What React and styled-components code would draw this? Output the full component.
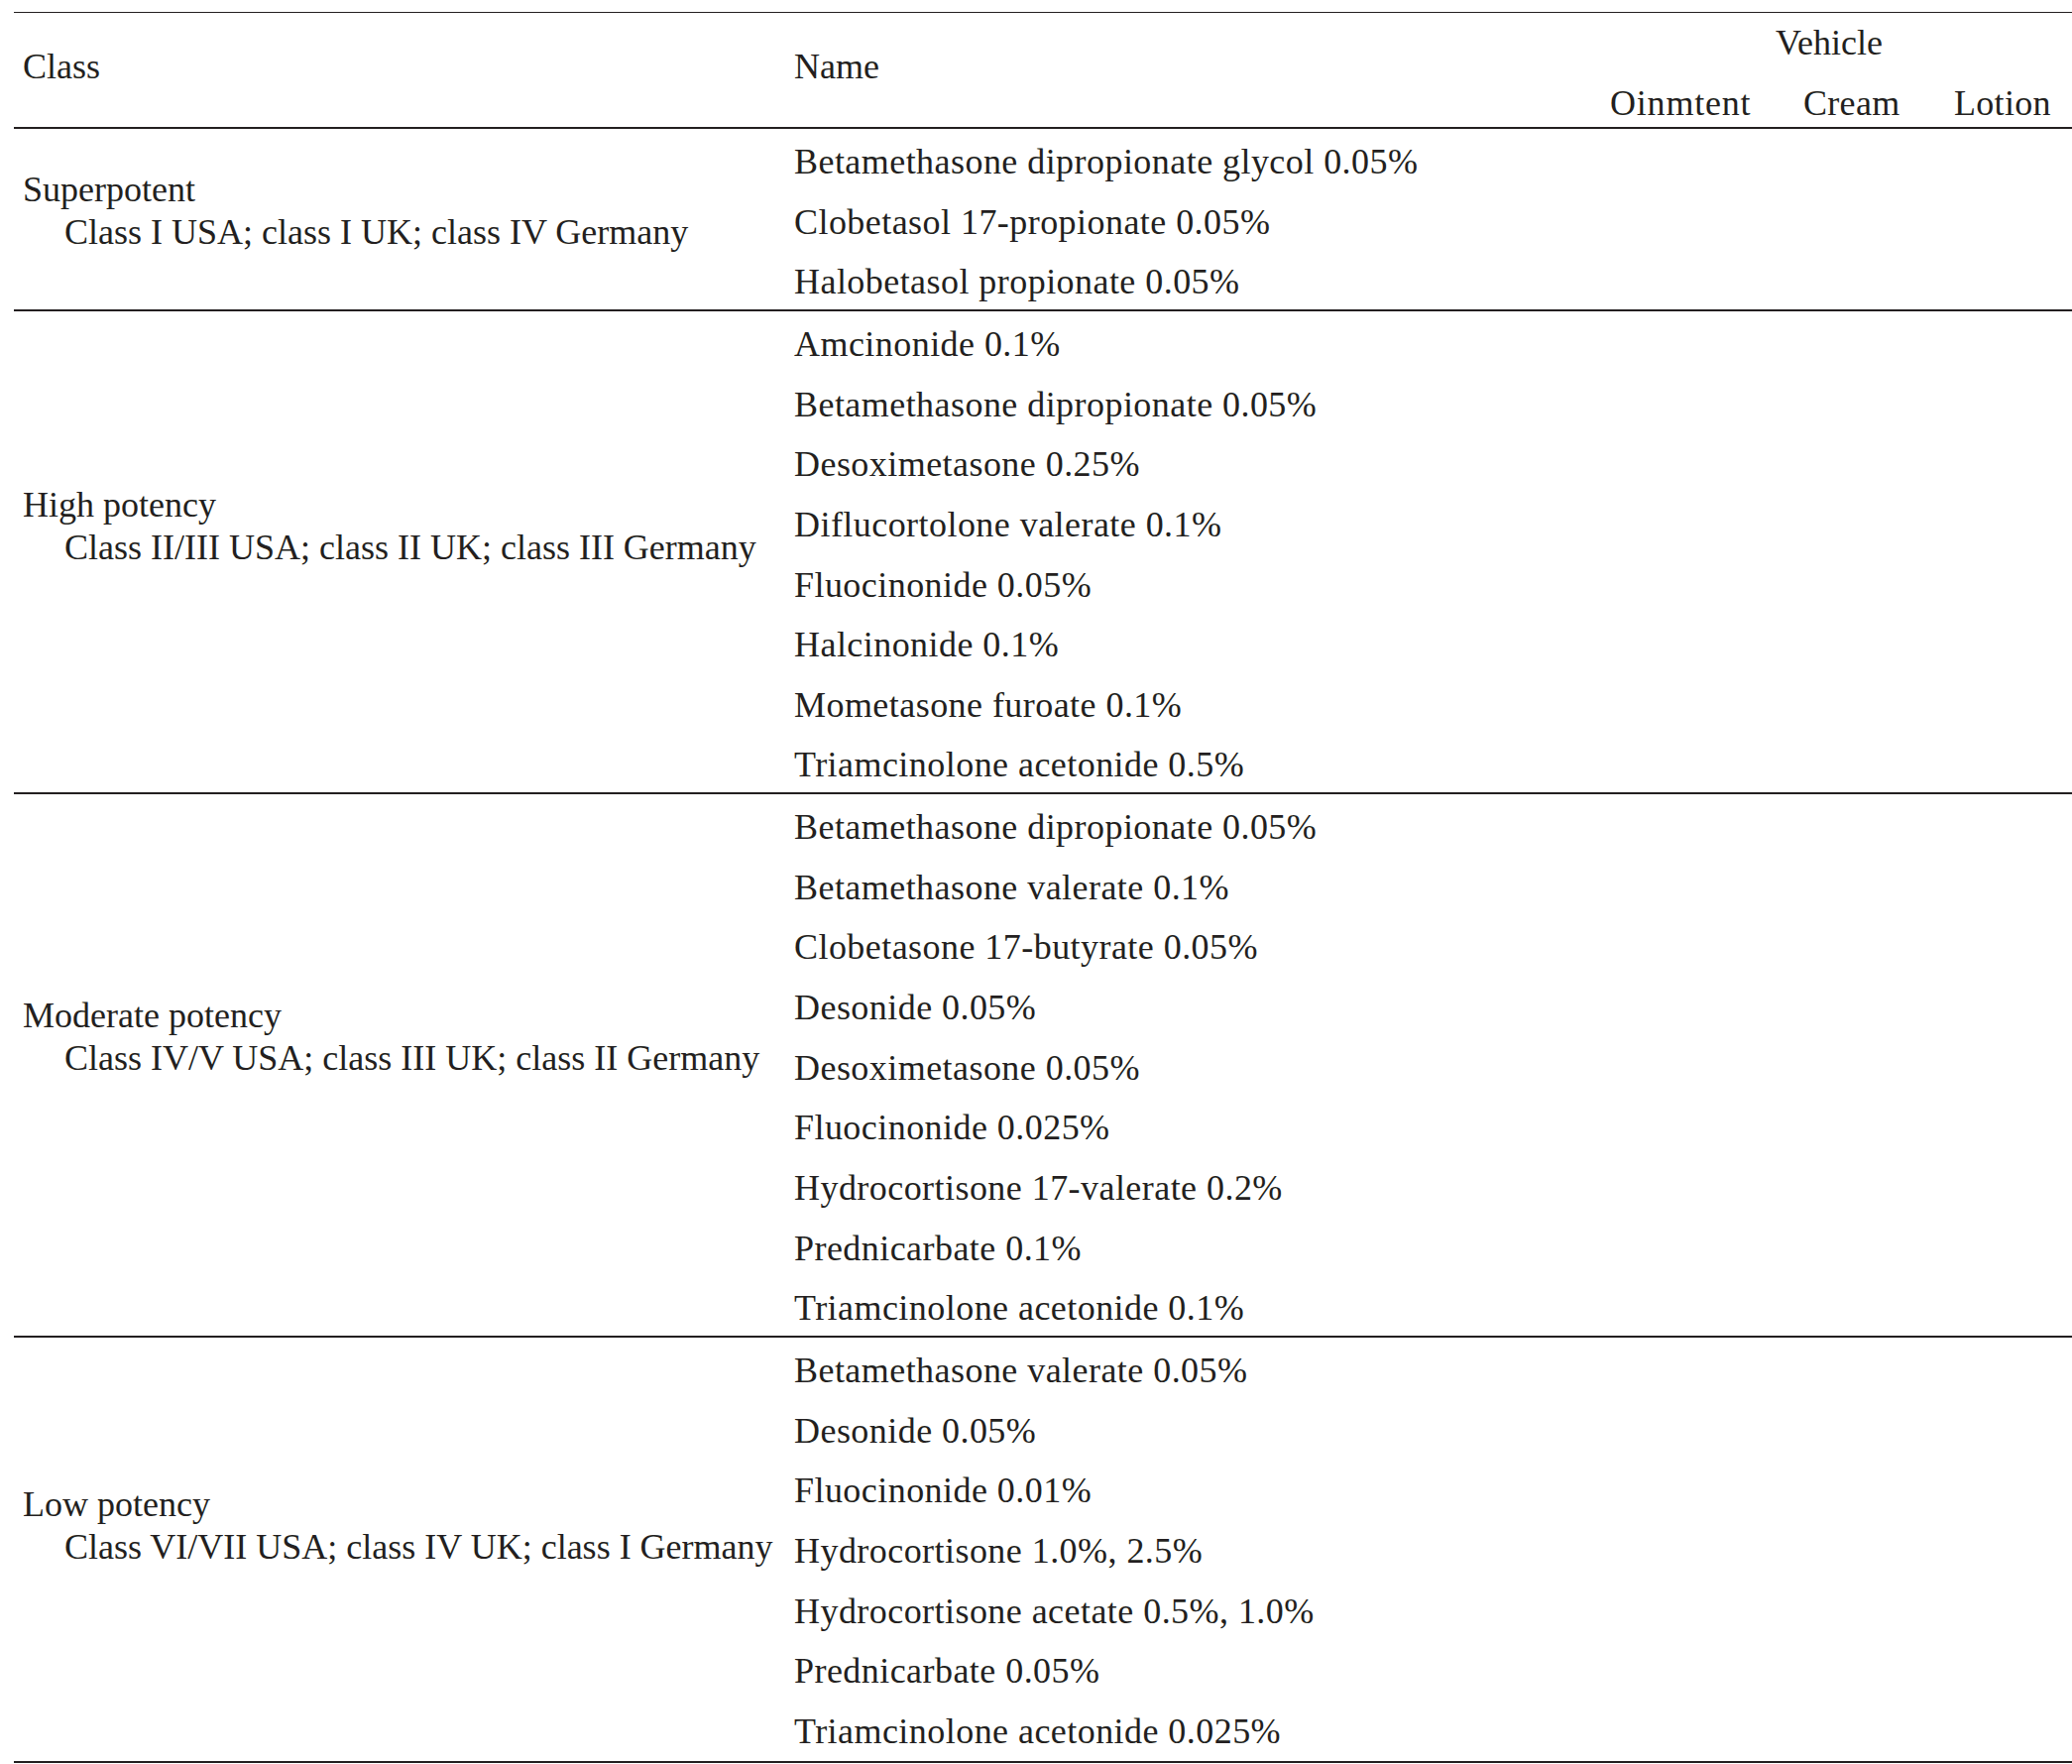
import React from 'react'
import styled, { createGlobalStyle } from 'styled-components'

const ink = '#231f20'
const columns = '778px 808px 195px 152px 143px'

const GlobalStyle = createGlobalStyle`
  html, body {
    margin: 0;
    padding: 0;
    background: #ffffff;
  }
  body {
    font-family: "Liberation Serif", "Times New Roman", serif;
    color: ${ink};
  }
  *, *::before, *::after {
    box-sizing: border-box;
  }
`

const groups = [
  {
    title: 'Superpotent',
    sub: 'Class I USA; class I UK; class IV Germany',
    lift: 15,
    rowH: 60.67,
    tail: 0,
    names: [
      'Betamethasone dipropionate glycol 0.05%',
      'Clobetasol 17-propionate 0.05%',
      'Halobetasol propionate 0.05%',
    ],
  },
  {
    title: 'High potency',
    sub: 'Class II/III USA; class II UK; class III Germany',
    lift: 50,
    rowH: 60.625,
    tail: 0,
    names: [
      'Amcinonide 0.1%',
      'Betamethasone dipropionate 0.05%',
      'Desoximetasone 0.25%',
      'Diflucortolone valerate 0.1%',
      'Fluocinonide 0.05%',
      'Halcinonide 0.1%',
      'Mometasone furoate 0.1%',
      'Triamcinolone acetonide 0.5%',
    ],
  },
  {
    title: 'Moderate potency',
    sub: 'Class IV/V USA; class III UK; class II Germany',
    lift: 55,
    rowH: 60.67,
    tail: 0,
    names: [
      'Betamethasone dipropionate 0.05%',
      'Betamethasone valerate 0.1%',
      'Clobetasone 17-butyrate 0.05%',
      'Desonide 0.05%',
      'Desoximetasone 0.05%',
      'Fluocinonide 0.025%',
      'Hydrocortisone 17-valerate 0.2%',
      'Prednicarbate 0.1%',
      'Triamcinolone acetonide 0.1%',
    ],
  },
  {
    title: 'Low potency',
    sub: 'Class VI/VII USA; class IV UK; class I Germany',
    lift: 45,
    rowH: 60.67,
    tail: 3,
    names: [
      'Betamethasone valerate 0.05%',
      'Desonide 0.05%',
      'Fluocinonide 0.01%',
      'Hydrocortisone 1.0%, 2.5%',
      'Hydrocortisone acetate 0.5%, 1.0%',
      'Prednicarbate 0.05%',
      'Triamcinolone acetonide 0.025%',
    ],
  },
]

const Table = styled.div`
  margin: 12px 0 0 14px;
  width: 2076px;
  font-size: 36px;
  line-height: 1.15;
  color: ${ink};
`

const Head = styled.div`
  display: grid;
  grid-template-columns: ${columns};
  grid-template-rows: 58px 57px;
  align-items: center;
  border-top: 1px solid ${ink};
  border-bottom: 2px solid ${ink};
`

const HeadCell = styled.div`
  grid-column: ${(p) => p.$col};
  grid-row: ${(p) => p.$row};
  text-align: ${(p) => p.$align || 'left'};
  padding: ${(p) => p.$top || 0}px 0 ${(p) => p.$bottom || 0}px ${(p) => p.$pad ?? 9}px;
  letter-spacing: ${(p) => p.$track || 0}px;
  white-space: nowrap;
`

const Group = styled.div`
  display: grid;
  grid-template-columns: ${columns};
  grid-auto-rows: ${(p) => p.$rowH}px;
  align-items: center;
  padding-bottom: ${(p) => p.$tail}px;
  border-bottom: 2px solid ${ink};
`

const ClassCell = styled.div`
  grid-column: 1;
  grid-row: 1 / span ${(p) => p.$span};
  padding: 0 0 ${(p) => p.$lift}px 9px;
  white-space: nowrap;
`

const ClassTitle = styled.div`
  line-height: 43px;
`

const ClassSub = styled.div`
  line-height: 43px;
  padding-left: 42px;
`

const NameCell = styled.div`
  grid-column: 2;
  padding: 7px 0 0 9px;
  letter-spacing: 0.45px;
  white-space: nowrap;
`

export default function App() {
  return (
    <>
      <GlobalStyle />
      <Table>
        <Head>
          <HeadCell $col="1" $row="1 / 3" $bottom={6}>Class</HeadCell>
          <HeadCell $col="2" $row="1 / 3" $bottom={6}>Name</HeadCell>
          <HeadCell $col="3 / 6" $row="1" $align="center" $pad={0} $top={4}>
            Vehicle
          </HeadCell>
          <HeadCell $col="3" $row="2" $pad={24} $top={10} $track={0.8}>Oinmtent</HeadCell>
          <HeadCell $col="4" $row="2" $pad={24} $top={10} $track={0.3}>Cream</HeadCell>
          <HeadCell $col="5" $row="2" $pad={24} $top={10} $track={0.3}>Lotion</HeadCell>
        </Head>
        {groups.map((g) => (
          <Group key={g.title} $rowH={g.rowH} $tail={g.tail}>
            <ClassCell $span={g.names.length} $lift={g.lift}>
              <ClassTitle>{g.title}</ClassTitle>
              <ClassSub>{g.sub}</ClassSub>
            </ClassCell>
            {g.names.map((name) => (
              <NameCell key={name}>{name}</NameCell>
            ))}
          </Group>
        ))}
      </Table>
    </>
  )
}
